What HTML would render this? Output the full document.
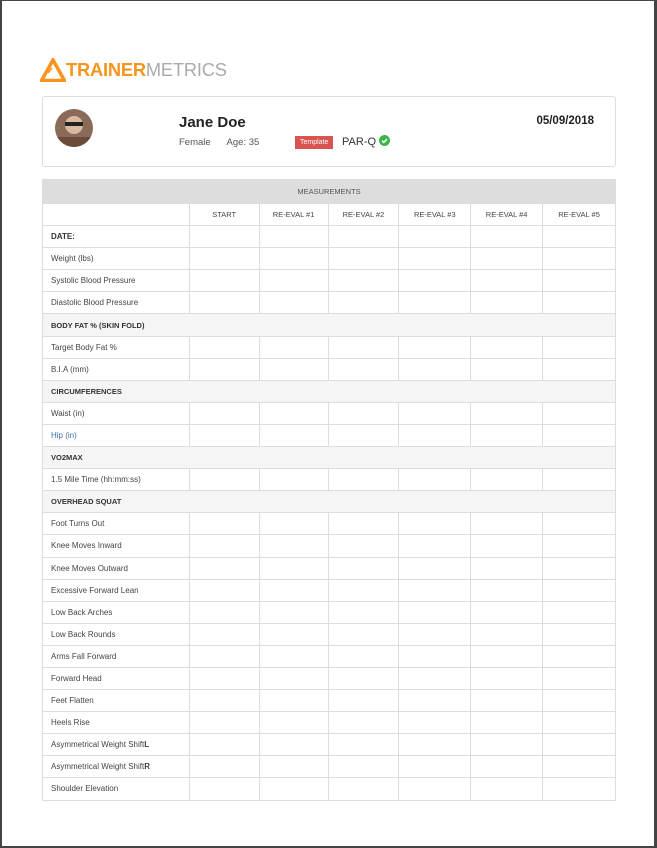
<!DOCTYPE html>
<html><head><meta charset="utf-8"><style>
*{box-sizing:border-box;margin:0;padding:0}
html,body{width:657px;height:848px;overflow:hidden;background:#fff}
body{font-family:"Liberation Sans",sans-serif;color:#555;position:relative}
.frame{position:absolute;left:0;top:0;width:657px;height:848px;border-top:1px solid #444;border-left:2px solid #444;border-right:3px solid #444;border-bottom:2px solid #444;pointer-events:none}
.logo{position:absolute;left:40px;top:58px;height:24px;display:flex;align-items:center}
.logo span{font-size:18.3px;font-weight:bold;letter-spacing:-0.2px}
.card{position:absolute;left:42px;top:96px;width:574px;height:71px;border:1px solid #ddd;border-radius:3px}
.av{position:absolute;left:12px;top:12px;width:38px;height:38px;border-radius:50%;overflow:hidden}
.name{position:absolute;left:136px;top:17px;font-size:15px;font-weight:bold;color:#222}
.sub{position:absolute;left:136px;top:40px;font-size:9.5px;color:#555}
.tag{position:absolute;left:252px;top:39px;background:#d9534f;color:#fff;font-size:7px;padding:3px 5px;height:13px;line-height:8px}
.parq{position:absolute;left:299px;top:38px;font-size:11px;color:#333}
.date{position:absolute;right:21px;top:18px;font-size:11.5px;font-weight:bold;color:#222}
table{position:absolute;left:42px;top:179px;width:574px;border-collapse:collapse;font-size:8px;color:#444}
td,th{border:1px solid #ddd;height:22.1px;padding:0 0 0 8px;text-align:left;font-weight:normal}
th.m{background:#ddd;text-align:center;height:24px;padding:0;color:#555;font-size:7.5px}
tr.h td{text-align:center;padding:0;font-size:7.5px}
tr.s td{background:#f5f5f5;font-weight:bold;color:#333;font-size:7.5px}
td.b{font-weight:bold;color:#333}
</style></head><body>
<div class="logo"><svg width="26" height="24" viewBox="0 0 26 24"><path d="M13 2 L24.5 22.5 L1.5 22.5 Z" fill="none" stroke="#f7941d" stroke-width="3.5" stroke-linejoin="miter"/><path d="M8 15 L12 10" stroke="#f7941d" stroke-width="1.5"/></svg><span style="color:#f7941d">TRAINER</span><span style="color:#aaa;font-weight:normal">METRICS</span></div>
<div class="card">
<div class="av"><svg width="38" height="38"><rect width="38" height="38" fill="#8a6a58"/><circle cx="19" cy="16" r="9" fill="#d9b9a0"/><rect x="10" y="13" width="18" height="4" fill="#222"/><rect x="0" y="28" width="38" height="10" fill="#6b4b3a"/></svg></div>
<div class="name">Jane Doe</div>
<div class="sub">Female &nbsp; &nbsp; &nbsp;Age: 35</div>
<div class="tag">Template</div>
<div class="parq">PAR-Q <svg width="11" height="11" viewBox="0 0 11 11" style="vertical-align:-1px"><circle cx="5.5" cy="5.5" r="5.5" fill="#3cb54a"/><path d="M3 5.7 L4.8 7.4 L8 4" stroke="#fff" stroke-width="1.6" fill="none"/></svg></div>
<div class="date">05/09/2018</div>
</div>
<table>
<colgroup><col style="width:147px"><col style="width:70px"><col style="width:69px"><col style="width:71px"><col style="width:72px"><col style="width:72px"><col style="width:73px"></colgroup>
<tr><th class="m" colspan="7">MEASUREMENTS</th></tr>
<tr class="h"><td></td><td>START</td><td>RE-EVAL #1</td><td>RE-EVAL #2</td><td>RE-EVAL #3</td><td>RE-EVAL #4</td><td>RE-EVAL #5</td></tr>
<tr><td class="b">DATE:</td><td></td><td></td><td></td><td></td><td></td><td></td></tr>
<tr><td>Weight (lbs)</td><td></td><td></td><td></td><td></td><td></td><td></td></tr>
<tr><td>Systolic Blood Pressure</td><td></td><td></td><td></td><td></td><td></td><td></td></tr>
<tr><td>Diastolic Blood Pressure</td><td></td><td></td><td></td><td></td><td></td><td></td></tr>
<tr class="s"><td colspan="7">BODY FAT % (SKIN FOLD)</td></tr>
<tr><td>Target Body Fat %</td><td></td><td></td><td></td><td></td><td></td><td></td></tr>
<tr><td>B.I.A (mm)</td><td></td><td></td><td></td><td></td><td></td><td></td></tr>
<tr class="s"><td colspan="7">CIRCUMFERENCES</td></tr>
<tr><td>Waist (in)</td><td></td><td></td><td></td><td></td><td></td><td></td></tr>
<tr><td style="color:#3a6ea5">Hip (in)</td><td></td><td></td><td></td><td></td><td></td><td></td></tr>
<tr class="s"><td colspan="7">VO2MAX</td></tr>
<tr><td>1.5 Mile Time (hh:mm:ss)</td><td></td><td></td><td></td><td></td><td></td><td></td></tr>
<tr class="s"><td colspan="7">OVERHEAD SQUAT</td></tr>
<tr><td>Foot Turns Out</td><td></td><td></td><td></td><td></td><td></td><td></td></tr>
<tr><td>Knee Moves Inward</td><td></td><td></td><td></td><td></td><td></td><td></td></tr>
<tr><td>Knee Moves Outward</td><td></td><td></td><td></td><td></td><td></td><td></td></tr>
<tr><td>Excessive Forward Lean</td><td></td><td></td><td></td><td></td><td></td><td></td></tr>
<tr><td>Low Back Arches</td><td></td><td></td><td></td><td></td><td></td><td></td></tr>
<tr><td>Low Back Rounds</td><td></td><td></td><td></td><td></td><td></td><td></td></tr>
<tr><td>Arms Fall Forward</td><td></td><td></td><td></td><td></td><td></td><td></td></tr>
<tr><td>Forward Head</td><td></td><td></td><td></td><td></td><td></td><td></td></tr>
<tr><td>Feet Flatten</td><td></td><td></td><td></td><td></td><td></td><td></td></tr>
<tr><td>Heels Rise</td><td></td><td></td><td></td><td></td><td></td><td></td></tr>
<tr><td>Asymmetrical Weight Shift<b>L</b></td><td></td><td></td><td></td><td></td><td></td><td></td></tr>
<tr><td>Asymmetrical Weight Shift<b>R</b></td><td></td><td></td><td></td><td></td><td></td><td></td></tr>
<tr><td>Shoulder Elevation</td><td></td><td></td><td></td><td></td><td></td><td></td></tr>
</table>
<div class="frame"></div>
</body></html>
